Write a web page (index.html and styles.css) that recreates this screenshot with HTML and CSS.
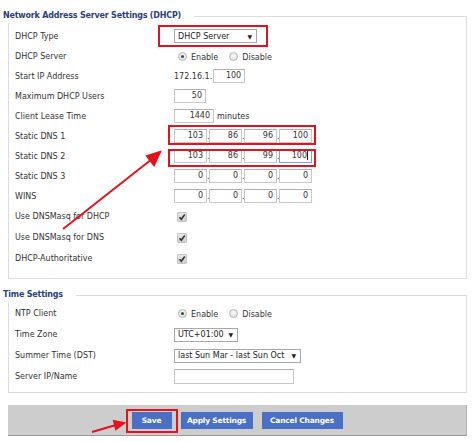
FILE: index.html
```html
<!DOCTYPE html>
<html>
<head>
<meta charset="utf-8">
<link rel="stylesheet" href="styles.css">
</head>
<body>
<div class="page">
  <fieldset class="group dhcp">
    <legend>Network Address Server Settings (DHCP)</legend>
    <div class="row"><div class="label">DHCP Type</div><div class="value"><div class="select w83"><span>DHCP Server</span><span class="arrow">▼</span></div></div></div>
    <div class="row"><div class="label">DHCP Server</div><div class="value"><span class="radio on"></span><span class="rtext">Enable</span><span class="radio"></span><span class="rtext">Disable</span></div></div>
    <div class="row"><div class="label">Start IP Address</div><div class="value"><span class="prefix">172.16.1.</span><span class="input w32">100</span></div></div>
    <div class="row"><div class="label">Maximum DHCP Users</div><div class="value"><span class="input w32">50</span></div></div>
    <div class="row"><div class="label">Client Lease Time</div><div class="value"><span class="input w40">1440</span><span class="unit">minutes</span></div></div>
    <div class="row"><div class="label">Static DNS 1</div><div class="value"><span class="input ip">103</span><span class="dot">.</span><span class="input ip">86</span><span class="dot">.</span><span class="input ip">96</span><span class="dot">.</span><span class="input ip">100</span></div></div>
    <div class="row"><div class="label">Static DNS 2</div><div class="value"><span class="input ip">103</span><span class="dot">.</span><span class="input ip">86</span><span class="dot">.</span><span class="input ip">99</span><span class="dot">.</span><span class="input ip focus">100<span class="caret"></span></span></div></div>
    <div class="row"><div class="label">Static DNS 3</div><div class="value"><span class="input ip">0</span><span class="dot">.</span><span class="input ip">0</span><span class="dot">.</span><span class="input ip">0</span><span class="dot">.</span><span class="input ip">0</span></div></div>
    <div class="row"><div class="label">WINS</div><div class="value"><span class="input ip">0</span><span class="dot">.</span><span class="input ip">0</span><span class="dot">.</span><span class="input ip">0</span><span class="dot">.</span><span class="input ip">0</span></div></div>
    <div class="row tall"><div class="label">Use DNSMasq for DHCP</div><div class="value"><span class="check"><svg viewBox="0 0 10 10" width="10" height="10"><path d="M2.5 5.2 L4.3 7.2 L7.8 2.6" fill="none" stroke="#333" stroke-width="1.6"/></svg></span></div></div>
    <div class="row tall"><div class="label">Use DNSMasq for DNS</div><div class="value"><span class="check"><svg viewBox="0 0 10 10" width="10" height="10"><path d="M2.5 5.2 L4.3 7.2 L7.8 2.6" fill="none" stroke="#333" stroke-width="1.6"/></svg></span></div></div>
    <div class="row tall"><div class="label">DHCP-Authoritative</div><div class="value"><span class="check"><svg viewBox="0 0 10 10" width="10" height="10"><path d="M2.5 5.2 L4.3 7.2 L7.8 2.6" fill="none" stroke="#333" stroke-width="1.6"/></svg></span></div></div>
  </fieldset>

  <fieldset class="group time">
    <legend>Time Settings</legend>
    <div class="row tall"><div class="label">NTP Client</div><div class="value"><span class="radio on"></span><span class="rtext">Enable</span><span class="radio"></span><span class="rtext">Disable</span></div></div>
    <div class="row tall"><div class="label">Time Zone</div><div class="value"><div class="select w64"><span>UTC+01:00</span><span class="arrow">▼</span></div></div></div>
    <div class="row tall"><div class="label">Summer Time (DST)</div><div class="value"><div class="select w127"><span>last Sun Mar - last Sun Oct</span><span class="arrow">▼</span></div></div></div>
    <div class="row tall"><div class="label">Server IP/Name</div><div class="value"><span class="input w120 big"></span></div></div>
  </fieldset>

  <div class="buttons">
    <button class="btn save">Save</button>
    <button class="btn apply">Apply Settings</button>
    <button class="btn cancel">Cancel Changes</button>
  </div>

  <svg class="annot" width="474" height="442" viewBox="0 0 474 442">
    <g fill="none" stroke="#e3121c" stroke-width="2">
      <rect x="159" y="26" width="108" height="20"/>
      <rect x="169" y="126" width="146" height="18"/>
      <rect x="169" y="150" width="146" height="16"/>
      <rect x="127" y="410" width="50" height="22"/>
    </g>
    <g stroke="#e3121c" stroke-width="2" fill="#e3121c">
      <line x1="63" y1="229" x2="152" y2="159"/>
      <polygon points="160,152 147,156 154,165"/>
      <line x1="92" y1="432" x2="116" y2="425"/>
      <polygon points="124,423 114,421 116,429"/>
    </g>
  </svg>
</div>
</body>
</html>
```
FILE: styles.css
```css
* { box-sizing: border-box; }
html, body { margin: 0; padding: 0; background: #fff; }
body {
  font-family: "DejaVu Sans", Verdana, sans-serif;
  font-size: 8px;
  color: #333;
}
.page {
  position: relative;
  width: 474px;
  height: 442px;
  padding: 9px 7px 0 8px;
}
.group {
  border: 1px solid #dcdcdc;
  margin: 0;
  padding: 3px 6px 9px 6px;
  min-width: 0;
}
.group legend {
  font-weight: bold;
  color: #2a3f7c;
  font-size: 8px;
  line-height: 14px;
  padding: 0 13px 0 0;
  margin-left: -12px;
  letter-spacing: -0.2px;
}
.time { margin-top: 9px; padding-top: 1px; padding-bottom: 5px; }
.row {
  display: flex;
  align-items: center;
  height: 20px;
}
.row.tall { height: 21px; }
.label { width: 159px; flex: none; }
.value { display: flex; align-items: center; }
.input {
  display: inline-block;
  height: 14px;
  line-height: 12px;
  border: 1px solid #c8c8c8;
  border-top-color: #b0b0b0;
  background: #fff;
  text-align: right;
  padding: 0 3px;
  color: #333;
  position: relative;
}
.input.big { height: 15px; }
.w32 { width: 32px; }
.w40 { width: 40px; }
.w120 { width: 120px; }
.ip { width: 33px; }
.dot { width: 2px; text-align: center; line-height: 14px; padding-top: 2px; }
.input.focus { border-color: #7da2ce; }
.caret {
  display: inline-block;
  width: 1px;
  height: 10px;
  background: #222;
  vertical-align: middle;
  margin-left: 0;
  position: relative;
  top: -1px;
}
.prefix { margin-right: 1px; }
.unit { margin-left: 3px; }
.select {
  display: flex;
  align-items: center;
  justify-content: space-between;
  height: 14px;
  border: 1px solid #a8a8a8;
  background: #fff;
  padding: 0 4px 0 3px;
  color: #222;
}
.select .arrow { font-size: 6px; color: #222; }
.w83 { width: 83px; }
.w64 { width: 64px; }
.w127 { width: 127px; }
.radio {
  display: inline-block;
  width: 9px;
  height: 9px;
  border-radius: 50%;
  border: 1px solid #b8b8b8;
  background: radial-gradient(circle at 50% 40%, #fafafa, #d6d6d6);
  margin-left: 4px;
  margin-right: 4px;
  position: relative;
}
.radio.on::after {
  content: "";
  position: absolute;
  left: 2px; top: 2px;
  width: 3px; height: 3px;
  border-radius: 50%;
  background: #444;
}
.rtext { margin-right: 7px; margin-top: 2px; }
.check {
  display: inline-block;
  width: 10px;
  height: 10px;
  margin-left: 3px;
  border: 1px solid #c4c4c4;
  border-radius: 1px;
  background: linear-gradient(#e8e8e8, #cfcfcf);
  position: relative;
}
.check svg { position: absolute; left: -1px; top: -1px; }
.buttons {
  margin-top: 12px;
  height: 31px;
  background: #cdcdcd;
  border-bottom: 1px solid #9a9a9a;
  border-right: 1px solid #b0b0b0;
  display: flex;
  justify-content: center;
  align-items: flex-start;
  gap: 9px;
  padding-top: 7px;
}
.btn {
  height: 17px;
  border: none;
  background: #4a6fc4;
  color: #fff;
  font-family: "DejaVu Sans", Verdana, sans-serif;
  font-weight: bold;
  font-size: 7.5px;
  padding: 0;
  letter-spacing: -0.2px;
}
.save { width: 40px; }
.apply { width: 72px; }
.cancel { width: 81px; }
.annot { position: absolute; left: 0; top: 0; pointer-events: none; }
```
